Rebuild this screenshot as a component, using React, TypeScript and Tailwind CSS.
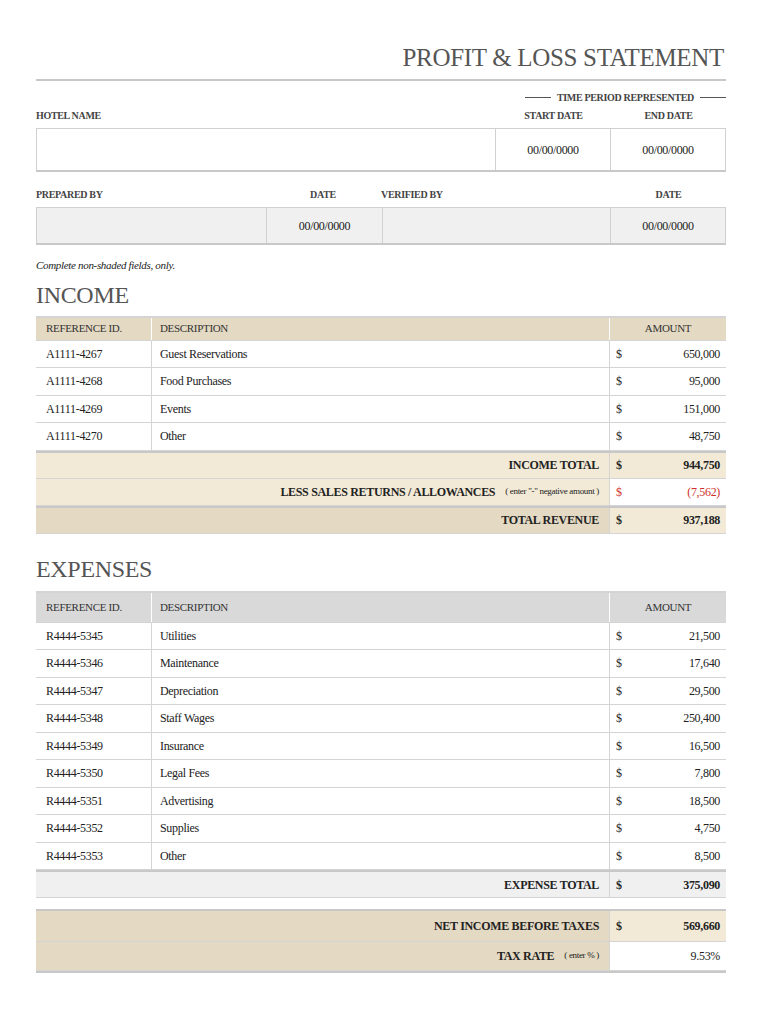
import React from "react";

const F = { fontFamily: '"Liberation Serif", Tinos, "Times New Roman", serif' };

type Row = [string, string, string];
const income: Row[] = [
  ["A1111-4267", "Guest Reservations", "650,000"],
  ["A1111-4268", "Food Purchases", "95,000"],
  ["A1111-4269", "Events", "151,000"],
  ["A1111-4270", "Other", "48,750"],
];
const expenses: Row[] = [
  ["R4444-5345", "Utilities", "21,500"],
  ["R4444-5346", "Maintenance", "17,640"],
  ["R4444-5347", "Depreciation", "29,500"],
  ["R4444-5348", "Staff Wages", "250,400"],
  ["R4444-5349", "Insurance", "16,500"],
  ["R4444-5350", "Legal Fees", "7,800"],
  ["R4444-5351", "Advertising", "18,500"],
  ["R4444-5352", "Supplies", "4,750"],
  ["R4444-5353", "Other", "8,500"],
];

function DataRow({ r }: { r: Row }) {
  return (
    <div className="flex h-[27.5px] border-b border-[#d4d4d4] text-[12px] text-[#222]">
      <div className="w-[116px] border-r border-[#d4d4d4] pl-[10px] flex items-center">{r[0]}</div>
      <div className="flex-1 border-r border-[#d4d4d4] pl-[8px] flex items-center">{r[1]}</div>
      <div className="w-[116px] flex items-center justify-between px-[6px]"><span>$</span><span>{r[2]}</span></div>
    </div>
  );
}

function Header({ bg, h }: { bg: string; h: string }) {
  return (
    <div className={`flex ${h} ${bg} border-t-2 border-[#c8c8c8] border-b border-[#d4d4d4] text-[11px] text-[#333]`}>
      <div className="w-[116px] border-r border-white pl-[10px] flex items-center">REFERENCE ID.</div>
      <div className="flex-1 border-r border-white pl-[8px] flex items-center">DESCRIPTION</div>
      <div className="w-[116px] flex items-center justify-center">AMOUNT</div>
    </div>
  );
}

function TotalRow({ label, note, val, bg, valBg, h, red, top }: { label: string; note?: string; val: string; bg: string; valBg: string; h: string; red?: boolean; top?: boolean }) {
  return (
    <div className={`flex ${h} ${bg} border-b border-[#d4d4d4] ${top ? "border-t-2 border-t-[#c8c8c8]" : ""} text-[12px] font-bold text-[#222]`}>
      <div className="flex-1 flex items-center justify-end pr-[10px] border-r border-[#d4d4d4]">
        {label}
        {note && <span className="font-normal text-[9px] ml-[10px]">{note}</span>}
      </div>
      <div className={`w-[116px] flex items-center justify-between px-[6px] ${valBg} ${red ? "text-[#d0302a] font-normal" : ""}`}>
        {val.startsWith("9.") ? <><span /> <span className="font-normal">{val}</span></> : <><span>$</span><span>{val}</span></>}
      </div>
    </div>
  );
}

export default function App() {
  return (
    <div style={F} className="w-[768px] h-[1024px] bg-white px-[36px] pt-[42px] text-[#222] tracking-[-0.02em]">
      <div className="w-[690px]">
        <div className="text-right text-[25px] text-[#555] leading-[32px] pr-[2px]">PROFIT &amp; LOSS STATEMENT</div>
        <div className="h-[2px] bg-[#c8c8c8] mt-[5px]" />
        <div className="flex justify-end mt-[10px] text-[10px] font-bold text-[#444] items-center h-[12px]">
          <span className="w-[26px] h-px bg-[#555] mr-[6px]" />TIME PERIOD REPRESENTED<span className="w-[26px] h-px bg-[#555] ml-[6px]" />
        </div>
        <div className="flex text-[10px] font-bold text-[#444] mt-[6px] h-[12px] items-center">
          <div className="flex-1">HOTEL NAME</div>
          <div className="w-[115px] text-center">START DATE</div>
          <div className="w-[115px] text-center">END DATE</div>
        </div>
        <div className="flex h-[44px] border border-[#d0d0d0] border-b-2 border-b-[#c8c8c8] mt-[7px] text-[12px]">
          <div className="flex-1" />
          <div className="w-[115px] border-l border-[#d0d0d0] flex items-center justify-center">00/00/0000</div>
          <div className="w-[115px] border-l border-[#d0d0d0] flex items-center justify-center">00/00/0000</div>
        </div>
        <div className="flex text-[10px] font-bold text-[#444] mt-[16px] h-[12px] items-center">
          <div className="w-[229px]">PREPARED BY</div>
          <div className="w-[116px] text-center">DATE</div>
          <div className="flex-1">VERIFIED BY</div>
          <div className="w-[115px] text-center">DATE</div>
        </div>
        <div className="flex h-[38px] bg-[#f0f0f0] border border-[#d0d0d0] border-b-2 border-b-[#c8c8c8] mt-[7px] text-[12px]">
          <div className="w-[229px]" />
          <div className="w-[116px] border-l border-[#d0d0d0] flex items-center justify-center">00/00/0000</div>
          <div className="flex-1 border-l border-[#d0d0d0]" />
          <div className="w-[115px] border-l border-[#d0d0d0] flex items-center justify-center">00/00/0000</div>
        </div>
        <div className="italic text-[11px] mt-[12px]">Complete non-shaded fields, only.</div>
        <div className="text-[24px] text-[#555] leading-[30px] mt-[6px]">INCOME</div>
        <div className="mt-[6px]">
          <Header bg="bg-[#e4d9c2]" h="h-[25px]" />
          {income.map((r) => <DataRow key={r[0]} r={r} />)}
          <TotalRow label="INCOME TOTAL" val="944,750" bg="bg-[#f2ead7]" valBg="bg-[#f2ead7]" h="h-[28px]" top />
          <TotalRow label="LESS SALES RETURNS / ALLOWANCES" note={'( enter "-" negative amount )'} val="(7,562)" bg="bg-[#f2ead7]" valBg="bg-white" h="h-[27px]" red />
          <TotalRow label="TOTAL REVENUE" val="937,188" bg="bg-[#e4d9c2]" valBg="bg-[#f2ead7]" h="h-[28px]" top />
        </div>
        <div className="text-[24px] text-[#555] leading-[30px] mt-[20px]">EXPENSES</div>
        <div className="mt-[7px]">
          <Header bg="bg-[#d9d9d9]" h="h-[32px]" />
          {expenses.map((r) => <DataRow key={r[0]} r={r} />)}
          <TotalRow label="EXPENSE TOTAL" val="375,090" bg="bg-[#f0f0f0]" valBg="bg-[#f0f0f0]" h="h-[28px]" top />
        </div>
        <div className="mt-[11px] border-b-2 border-[#c8c8c8]">
          <TotalRow label="NET INCOME BEFORE TAXES" val="569,660" bg="bg-[#e4d9c2]" valBg="bg-[#f2ead7]" h="h-[33px]" top />
          <TotalRow label="TAX RATE" note="( enter % )" val="9.53%" bg="bg-[#e4d9c2]" valBg="bg-white" h="h-[29px]" />
        </div>
      </div>
    </div>
  );
}
